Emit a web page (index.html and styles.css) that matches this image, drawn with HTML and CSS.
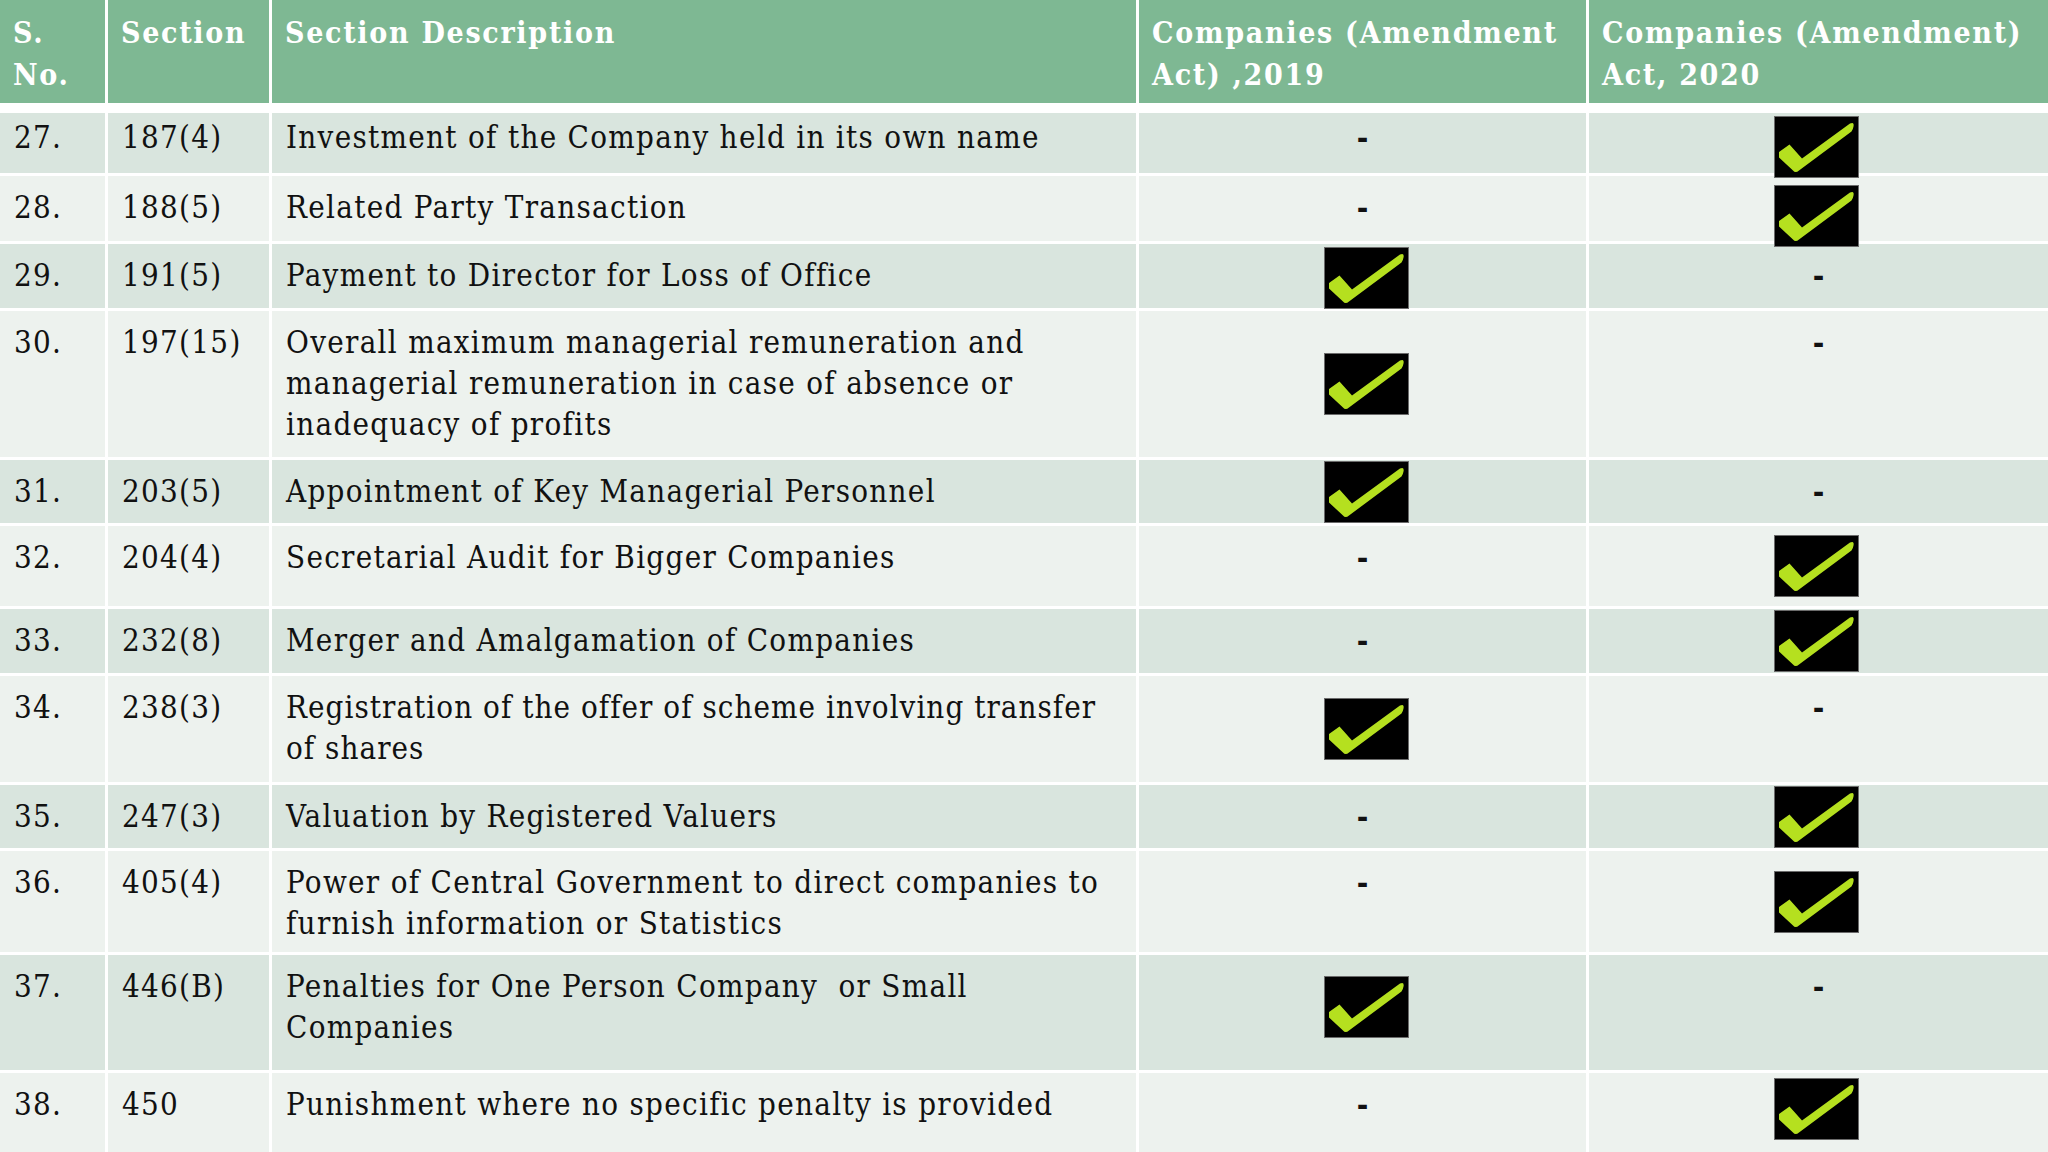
FILE: index.html
```html
<!DOCTYPE html>
<html lang="en">
<head>
<meta charset="utf-8">
<title>Companies Amendment Acts</title>
<link rel="stylesheet" href="styles.css">
</head>
<body>
<svg width="0" height="0" class="defs" aria-hidden="true">
  <defs>
    <symbol id="tick" viewBox="0 0 85 62">
      <rect x="0.5" y="0.5" width="84" height="61" fill="#000" stroke="#6b6b6b" stroke-width="1"/>
      <path d="M5 36 L15.5 28.5 L28 42.5 L76 7.5 Q80.5 5.5 79.5 10.5 Q79 13.5 77.5 15.5 L25 54.5 Q21.5 57.5 19 54.5 L5 41.5 Z" fill="#b5e01f"/>
    </symbol>
  </defs>
</svg>
<div class="table">
  <div class="row head">
    <div class="cell">S.<br>No.</div>
    <div class="cell">Section</div>
    <div class="cell">Section Description</div>
    <div class="cell">Companies (Amendment<br>Act) ,2019</div>
    <div class="cell">Companies (Amendment)<br>Act, 2020</div>
  </div>

  <div class="row dark r27 first">
    <div class="cell">27.</div>
    <div class="cell">187(4)</div>
    <div class="cell">Investment of the Company held in its own name</div>
    <div class="cell dash">-</div>
    <div class="cell mark col5"><svg class="tick"><use href="#tick"/></svg></div>
  </div>

  <div class="row light r28">
    <div class="cell">28.</div>
    <div class="cell">188(5)</div>
    <div class="cell">Related Party Transaction</div>
    <div class="cell dash">-</div>
    <div class="cell mark col5"><svg class="tick"><use href="#tick"/></svg></div>
  </div>

  <div class="row dark r29">
    <div class="cell">29.</div>
    <div class="cell">191(5)</div>
    <div class="cell">Payment to Director for Loss of Office</div>
    <div class="cell mark col4"><svg class="tick"><use href="#tick"/></svg></div>
    <div class="cell dash">-</div>
  </div>

  <div class="row light r30">
    <div class="cell">30.</div>
    <div class="cell">197(15)</div>
    <div class="cell">Overall maximum managerial remuneration and<br>managerial remuneration in case of absence or<br>inadequacy of profits</div>
    <div class="cell mark col4"><svg class="tick"><use href="#tick"/></svg></div>
    <div class="cell dash">-</div>
  </div>

  <div class="row dark r31">
    <div class="cell">31.</div>
    <div class="cell">203(5)</div>
    <div class="cell">Appointment of Key Managerial Personnel</div>
    <div class="cell mark col4"><svg class="tick"><use href="#tick"/></svg></div>
    <div class="cell dash">-</div>
  </div>

  <div class="row light r32">
    <div class="cell">32.</div>
    <div class="cell">204(4)</div>
    <div class="cell">Secretarial Audit for Bigger Companies</div>
    <div class="cell dash">-</div>
    <div class="cell mark col5"><svg class="tick"><use href="#tick"/></svg></div>
  </div>

  <div class="row dark r33">
    <div class="cell">33.</div>
    <div class="cell">232(8)</div>
    <div class="cell">Merger and Amalgamation of Companies</div>
    <div class="cell dash">-</div>
    <div class="cell mark col5"><svg class="tick"><use href="#tick"/></svg></div>
  </div>

  <div class="row light r34">
    <div class="cell">34.</div>
    <div class="cell">238(3)</div>
    <div class="cell tight">Registration of the offer of scheme involving transfer<br>of shares</div>
    <div class="cell mark col4"><svg class="tick"><use href="#tick"/></svg></div>
    <div class="cell dash">-</div>
  </div>

  <div class="row dark r35">
    <div class="cell">35.</div>
    <div class="cell">247(3)</div>
    <div class="cell">Valuation by Registered Valuers</div>
    <div class="cell dash">-</div>
    <div class="cell mark col5"><svg class="tick"><use href="#tick"/></svg></div>
  </div>

  <div class="row light r36">
    <div class="cell">36.</div>
    <div class="cell">405(4)</div>
    <div class="cell">Power of Central Government to direct companies to<br>furnish information or Statistics</div>
    <div class="cell dash">-</div>
    <div class="cell mark col5"><svg class="tick"><use href="#tick"/></svg></div>
  </div>

  <div class="row dark r37">
    <div class="cell">37.</div>
    <div class="cell">446(B)</div>
    <div class="cell">Penalties for One Person Company&nbsp; or Small<br>Companies</div>
    <div class="cell mark col4"><svg class="tick"><use href="#tick"/></svg></div>
    <div class="cell dash">-</div>
  </div>

  <div class="row light r38">
    <div class="cell">38.</div>
    <div class="cell">450</div>
    <div class="cell">Punishment where no specific penalty is provided</div>
    <div class="cell dash">-</div>
    <div class="cell mark col5"><svg class="tick"><use href="#tick"/></svg></div>
  </div>
</div>
</body>
</html>
```

FILE: styles.css
```css
html, body {
  margin: 0;
  padding: 0;
  overflow: hidden;
  background: #ffffff;
}

body {
  width: 2048px;
  height: 1152px;
  font-family: "DejaVu Serif Condensed", "DejaVu Serif", "Liberation Serif", serif;
  color: #111111;
}

.defs {
  position: absolute;
  width: 0;
  height: 0;
}

.table {
  display: flex;
  flex-direction: column;
  gap: 3px;
}

.row {
  display: grid;
  grid-template-columns: 105px 161px 864px 447px 459px;
  grid-template-rows: 100%;
  column-gap: 3px;
}

.cell {
  min-height: 0;
  padding: 11px 14px 0;
  font-size: 31px;
  line-height: 41px;
  letter-spacing: 1.3px;
  white-space: nowrap;
}

.cell.tight { letter-spacing: 1.05px; }

.dark .cell { background: #d9e5de; }
.light .cell { background: #edf2ee; }

.head {
  height: 103px;
  margin-bottom: 7px;
}

.head .cell {
  background: #7eb893;
  color: #ffffff;
  font-weight: bold;
  font-size: 30px;
  line-height: 42px;
  letter-spacing: 1.7px;
  padding: 12px 13px 0;
}

.first .cell { padding-top: 4px; }

.dash {
  text-align: center;
  font-weight: bold;
  letter-spacing: 0;
}

.mark {
  display: flex;
  align-items: center;
  justify-content: center;
  padding: 0;
}

.mark.col4 { padding-left: 8px; }
.mark.col5 { padding-right: 5px; }

.first .mark { padding-top: 8px; }
.r28 .mark { padding-top: 14px; }
.r29 .mark { padding-top: 4px; }
.r37 .mark { padding-bottom: 12px; }
.r38 .mark { padding-bottom: 8px; }

.tick {
  position: relative;
  z-index: 1;
  width: 85px;
  height: 62px;
  display: block;
  flex: none;
}

.r27 { height: 60px; }
.r28 { height: 65px; }
.r29 { height: 64px; }
.r30 { height: 146px; }
.r31 { height: 63px; }
.r32 { height: 80px; }
.r33 { height: 64px; }
.r34 { height: 106px; }
.r35 { height: 63px; }
.r36 { height: 101px; }
.r37 { height: 115px; }
.r38 { height: 79px; }
```
